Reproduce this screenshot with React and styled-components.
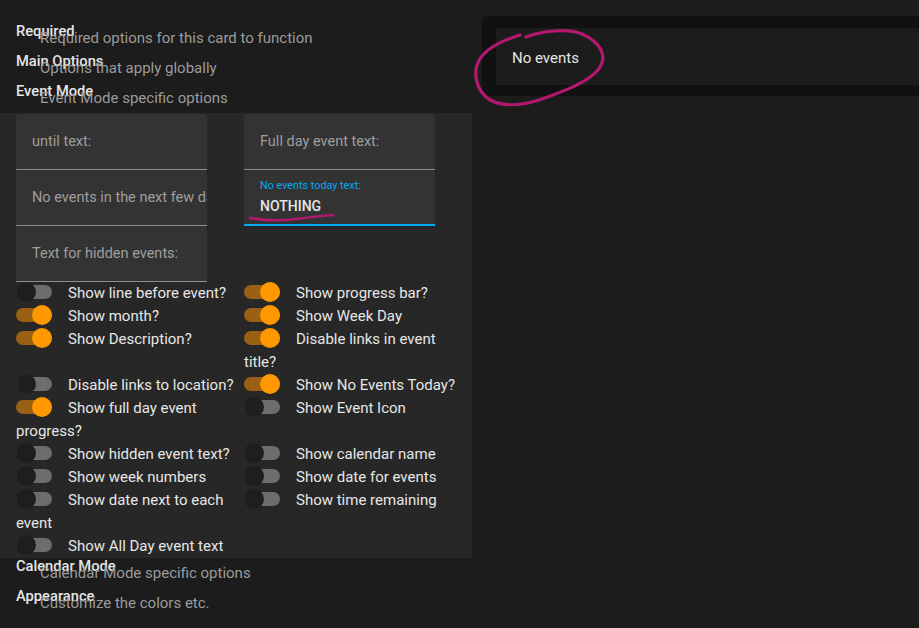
import React from "react";
import styled, { createGlobalStyle } from "styled-components";

const GlobalStyle = createGlobalStyle`
  html, body {
    margin: 0;
    padding: 0;
    background: #1c1c1c;
    overflow: hidden;
  }
  body {
    font-family: "Roboto", "Noto Sans", sans-serif;
    -webkit-font-smoothing: antialiased;
  }
`;

const sectionsTop = [
  { title: "Required", desc: "Required options for this card to function" },
  { title: "Main Options", desc: "Options that apply globally" },
  { title: "Event Mode", desc: "Event Mode specific options" },
];

const sectionsBottom = [
  { title: "Calendar Mode", desc: "Calendar Mode specific options" },
  { title: "Appearance", desc: "Customize the colors etc." },
];

const fields = [
  { label: "until text:" },
  { label: "Full day event text:" },
  { label: "No events in the next few days text:" },
  { label: "No events today text:", value: "NOTHING", focused: true },
  { label: "Text for hidden events:" },
];

const toggles = [
  ["Show line before event?", false],
  ["Show progress bar?", true],
  ["Show month?", true],
  ["Show Week Day", true],
  ["Show Description?", true],
  ["Disable links in event title?", true],
  ["Disable links to location?", false],
  ["Show No Events Today?", true],
  ["Show full day event progress?", true],
  ["Show Event Icon", false],
  ["Show hidden event text?", false],
  ["Show calendar name", false],
  ["Show week numbers", false],
  ["Show date for events", false],
  ["Show date next to each event", false],
  ["Show time remaining", false],
  ["Show All Day event text", false],
];

const App = () => (
  <>
    <GlobalStyle />
    <Page>
      <Editor>
        {sectionsTop.map((s) => (
          <SectionHeader key={s.title}>
            <SectionTitle>{s.title}</SectionTitle>
            <SectionDesc>{s.desc}</SectionDesc>
          </SectionHeader>
        ))}
        <Panel>
          <FieldGrid>
            {fields.map((f) =>
              f.focused ? (
                <Field key={f.label} $focused>
                  <FloatLabel>{f.label}</FloatLabel>
                  <FieldValue>{f.value}</FieldValue>
                  <Underline viewBox="0 0 100 12" width="100" height="12">
                    <path
                      d="M6 8 Q 30 12 52 9 T 89 5"
                      fill="none"
                      stroke="#b3186e"
                      strokeWidth="2.6"
                      strokeLinecap="round"
                    />
                  </Underline>
                </Field>
              ) : (
                <Field key={f.label}>
                  <FieldLabel>{f.label}</FieldLabel>
                </Field>
              )
            )}
          </FieldGrid>
          <ToggleGrid>
            {toggles.map(([label, on]) => (
              <ToggleCell key={label}>
                <Switch $on={on} />
                {label}
              </ToggleCell>
            ))}
          </ToggleGrid>
        </Panel>
        {sectionsBottom.map((s) => (
          <SectionHeader key={s.title}>
            <SectionTitle>{s.title}</SectionTitle>
            <SectionDesc>{s.desc}</SectionDesc>
          </SectionHeader>
        ))}
      </Editor>
      <Preview>
        <Card>
          <CardInner>
            <EmptyText>No events</EmptyText>
          </CardInner>
          <Circle viewBox="0 0 140 100" width="140" height="100">
            <path
              d="M54 21 C 70 15, 95 12, 110 18 C 128 26, 137 40, 126 54 C 115 67, 90 76, 67 84 C 48 90, 25 92, 13 80 C 3 70, 0 52, 10 40 C 18 30, 35 23, 48 19"
              fill="none"
              stroke="#b3186e"
              strokeWidth="3.2"
              strokeLinecap="round"
            />
          </Circle>
        </Card>
      </Preview>
    </Page>
  </>
);

const Page = styled.div`
  display: flex;
  align-items: flex-start;
  width: 919px;
  height: 628px;
`;

const Editor = styled.div`
  width: 472px;
  flex: none;
  padding-top: 23px;
`;

const SectionHeader = styled.div`
  display: grid;
  height: 30px;
  padding-left: 16px;
  line-height: 17px;
`;

const SectionTitle = styled.div`
  grid-area: 1 / 1;
  font-size: 14.7px;
  color: #e6e6e6;
  font-weight: 500;
`;

const SectionDesc = styled.div`
  grid-area: 1 / 1;
  margin-top: 7px;
  padding-left: 24px;
  font-size: 15px;
  color: #9b9b9b;
`;

const Panel = styled.div`
  background: #272727;
  padding-top: 1px;
  padding-left: 16px;
`;

const FieldGrid = styled.div`
  display: grid;
  grid-template-columns: 228px 228px;
`;

const Field = styled.div`
  position: relative;
  box-sizing: border-box;
  width: 191px;
  height: 56px;
  background: #333333;
  border-radius: 4px 4px 0 0;
  border-bottom: ${(p) => (p.$focused ? "2px solid #03a9f4" : "1px solid #8e8e8e")};
  padding: ${(p) => (p.$focused ? "10px 16px 0" : "1px 16px 0")};
  display: flex;
  flex-direction: column;
  justify-content: ${(p) => (p.$focused ? "flex-start" : "center")};
  overflow: hidden;
`;

const FieldLabel = styled.div`
  font-size: 14.5px;
  line-height: 20px;
  color: #9e9e9e;
  white-space: nowrap;
`;

const FloatLabel = styled.div`
  font-size: 10.8px;
  line-height: 12px;
  color: #03a9f4;
  white-space: nowrap;
`;

const FieldValue = styled.div`
  margin-top: 6px;
  font-size: 14px;
  line-height: 17px;
  font-weight: 500;
  color: #e6e6e6;
`;

const Underline = styled.svg`
  position: absolute;
  left: 0;
  top: 40px;
`;

const ToggleGrid = styled.div`
  display: grid;
  grid-template-columns: 228px 228px;
`;

const ToggleCell = styled.div`
  padding-right: 8px;
  font-size: 15px;
  line-height: 23px;
  color: #e6e6e6;
`;

const Switch = styled.span`
  position: relative;
  display: inline-block;
  vertical-align: middle;
  top: -2px;
  width: 36px;
  height: 14px;
  margin-right: 16px;
  border-radius: 7px;
  background: ${(p) => (p.$on ? "#9a6114" : "#6d6d6d")};

  &::after {
    content: "";
    position: absolute;
    top: -3px;
    left: ${(p) => (p.$on ? "16px" : "0")};
    width: 20px;
    height: 20px;
    border-radius: 50%;
    background: ${(p) => (p.$on ? "#ff9800" : "#1e1e1e")};
  }
`;

const Preview = styled.div`
  flex: 1;
  margin-left: 10px;
  padding-top: 16px;
  min-width: 0;
`;

const Card = styled.div`
  position: relative;
  margin-right: -20px;
  background: #111111;
  border-radius: 5px;
  padding: 12px 0 11px 14px;
`;

const CardInner = styled.div`
  display: flex;
  align-items: center;
  height: 57px;
  padding-left: 16px;
  background: #1c1c1c;
`;

const EmptyText = styled.div`
  font-size: 15px;
  color: #e6e6e6;
  margin-top: 3px;
`;

const Circle = styled.svg`
  position: absolute;
  left: -10px;
  top: 0;
  overflow: visible;
`;

export default App;
